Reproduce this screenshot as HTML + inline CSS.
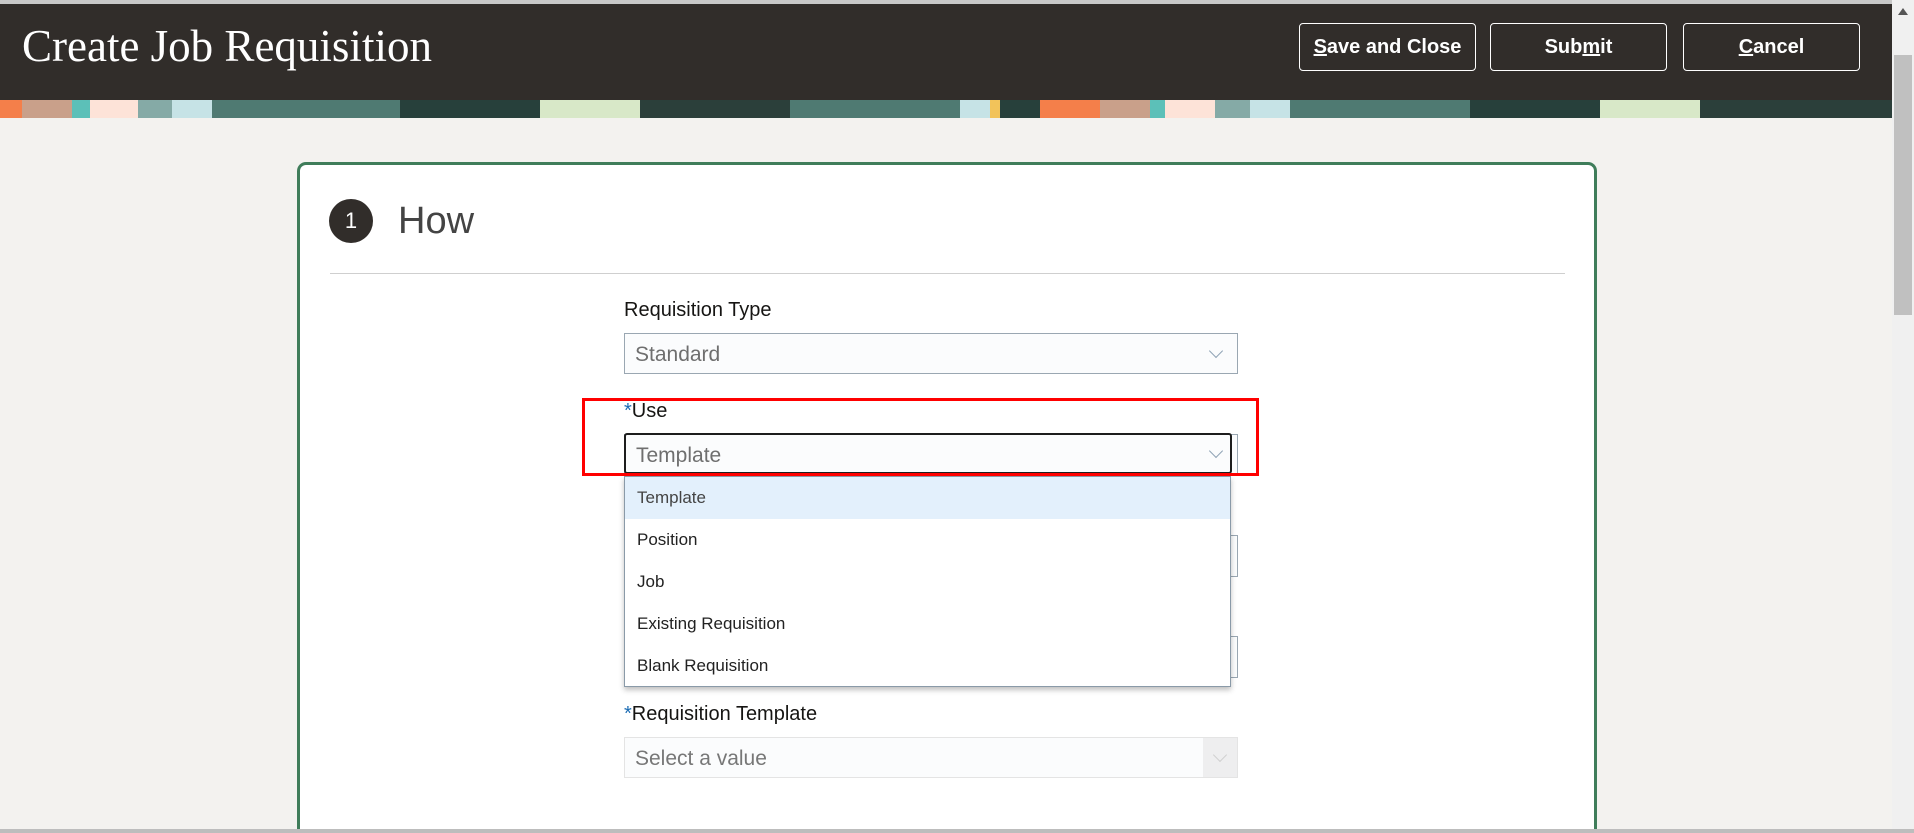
<!DOCTYPE html>
<html style="height:833px;overflow:hidden"><head><meta charset="utf-8"><style>
*{box-sizing:border-box;margin:0;padding:0}
body{width:1914px;height:833px;overflow:hidden;background:#f3f2ef;font-family:"Liberation Sans",Arial,sans-serif;position:relative}
.top{position:absolute;left:0;top:0;width:1892px;height:4px;background:#c8c8c8}
.hdr{position:absolute;left:0;top:4px;width:1892px;height:96px;background:#312d2a}
.title{position:absolute;left:22px;top:16px;font-family:"Liberation Serif",serif;font-size:45px;color:#fff}
.btn{position:absolute;top:19px;height:48px;border:1px solid #fff;border-radius:4px;color:#fff;font-weight:bold;font-size:20px;display:flex;align-items:center;justify-content:center}
.banner{position:absolute;left:0;top:100px;width:1892px;height:18px;background:linear-gradient(90deg,#f47f4a 0 22px,#c9a08a 22px 72px,#5cc0b8 72px 90px,#fde3d8 90px 138px,#85aaa6 138px 172px,#c6e3e6 172px 212px,#4f7a72 212px 400px,#27403b 400px 540px,#d8e8c8 540px 640px,#2b3f3a 640px 790px,#4f7a72 790px 960px,#c6e3e6 960px 990px,#f2c35a 990px 1000px,#27403b 1000px 1040px,#f47f4a 1040px 1100px,#c9a08a 1100px 1150px,#5cc0b8 1150px 1165px,#fde3d8 1165px 1215px,#85aaa6 1215px 1250px,#c6e3e6 1250px 1290px,#4f7a72 1290px 1470px,#27403b 1470px 1600px,#d8e8c8 1600px 1700px,#2b3f3a 1700px)}
.sb{position:absolute;right:0;top:0;width:22px;height:829px;background:#f0f0f0;z-index:5}
.thumb{position:absolute;right:2px;top:55px;width:18px;height:260px;background:#c0c0c0}
.card{position:absolute;left:297px;top:162px;width:1300px;height:667px;background:#fff;border:3px solid #3f7d5a;border-bottom:0;border-radius:9px 9px 0 0}
.circ{position:absolute;left:329px;top:199px;width:44px;height:44px;border-radius:50%;background:#312d2a;color:#fff;font-size:22px;display:flex;align-items:center;justify-content:center}
.how{position:absolute;left:398px;top:200px;font-size:38px;color:#444}
.sep{position:absolute;left:330px;top:273px;width:1235px;height:1px;background:#cfcfcf}
.lbl{position:absolute;left:624px;font-size:20px;color:#161513}
.ast{color:#1a6bb3}
.inp{position:absolute;left:624px;width:614px;height:41px;border:1px solid #9aa7b2;background:#fbfcfd;font-size:21px;color:#6f6f6f;padding:9px 10px}
.chev{position:absolute;width:10px;height:10px;border-right:1.5px solid #8fa3b5;border-bottom:1.5px solid #8fa3b5;transform:rotate(45deg)}
.dd{position:absolute;left:624px;top:476px;width:607px;height:211px;background:#fff;border:1px solid #8a9aa8;box-shadow:0 3px 5px rgba(0,0,0,.25)}
.it{height:42px;font-size:17px;color:#222;padding:11px 12px}
.red{position:absolute;left:582px;top:398px;width:677px;height:78px;border:3px solid #f00}
.bot{position:absolute;left:0;top:829px;width:1914px;height:4px;background:#bdbdbd;z-index:6}
</style></head><body>
<div class="top"></div>
<div class="hdr"><div class="title">Create Job Requisition</div>
<div class="btn" style="left:1299px;width:177px"><u>S</u>ave and Close</div>
<div class="btn" style="left:1490px;width:177px">Sub<u>m</u>it</div>
<div class="btn" style="left:1683px;width:177px"><u>C</u>ancel</div></div>
<div class="banner"></div>
<div class="card"></div>
<div class="circ">1</div>
<div class="how">How</div>
<div class="sep"></div>
<div class="lbl" style="top:299px">Requisition Type</div>
<div class="inp" style="top:333px">Standard</div>
<div class="chev" style="left:1211px;top:346px"></div>
<div class="lbl" style="top:400px"><span class="ast">*</span>Use</div>
<div class="inp" style="top:434px;width:614px"></div>
<div class="inp" style="top:433px;width:608px;border:2px solid #1d1d1d;border-radius:3px">Template</div>
<div class="chev" style="left:1211px;top:446px"></div>
<div class="inp" style="top:535px;height:42px"></div>
<div class="inp" style="top:636px;height:42px"></div>
<div class="dd">
<div class="it" style="background:#e3f0fc;color:#444">Template</div>
<div class="it">Position</div>
<div class="it">Job</div>
<div class="it">Existing Requisition</div>
<div class="it">Blank Requisition</div>
</div>
<div class="red"></div>
<div class="lbl" style="top:703px"><span class="ast">*</span>Requisition Template</div>
<div class="inp" style="top:737px;border-color:#e4e4e4;color:#777">Select a value</div>
<div style="position:absolute;left:1203px;top:738px;width:34px;height:39px;background:#eeeeef"></div>
<div class="chev" style="left:1215px;top:750px;border-color:#d0d0d0"></div>
<div class="bot"></div>
<div class="sb"><div class="thumb"></div><div style="position:absolute;left:6px;top:8px;border:5px solid transparent;border-bottom:7px solid #555;border-top:0"></div></div>
</body></html>
